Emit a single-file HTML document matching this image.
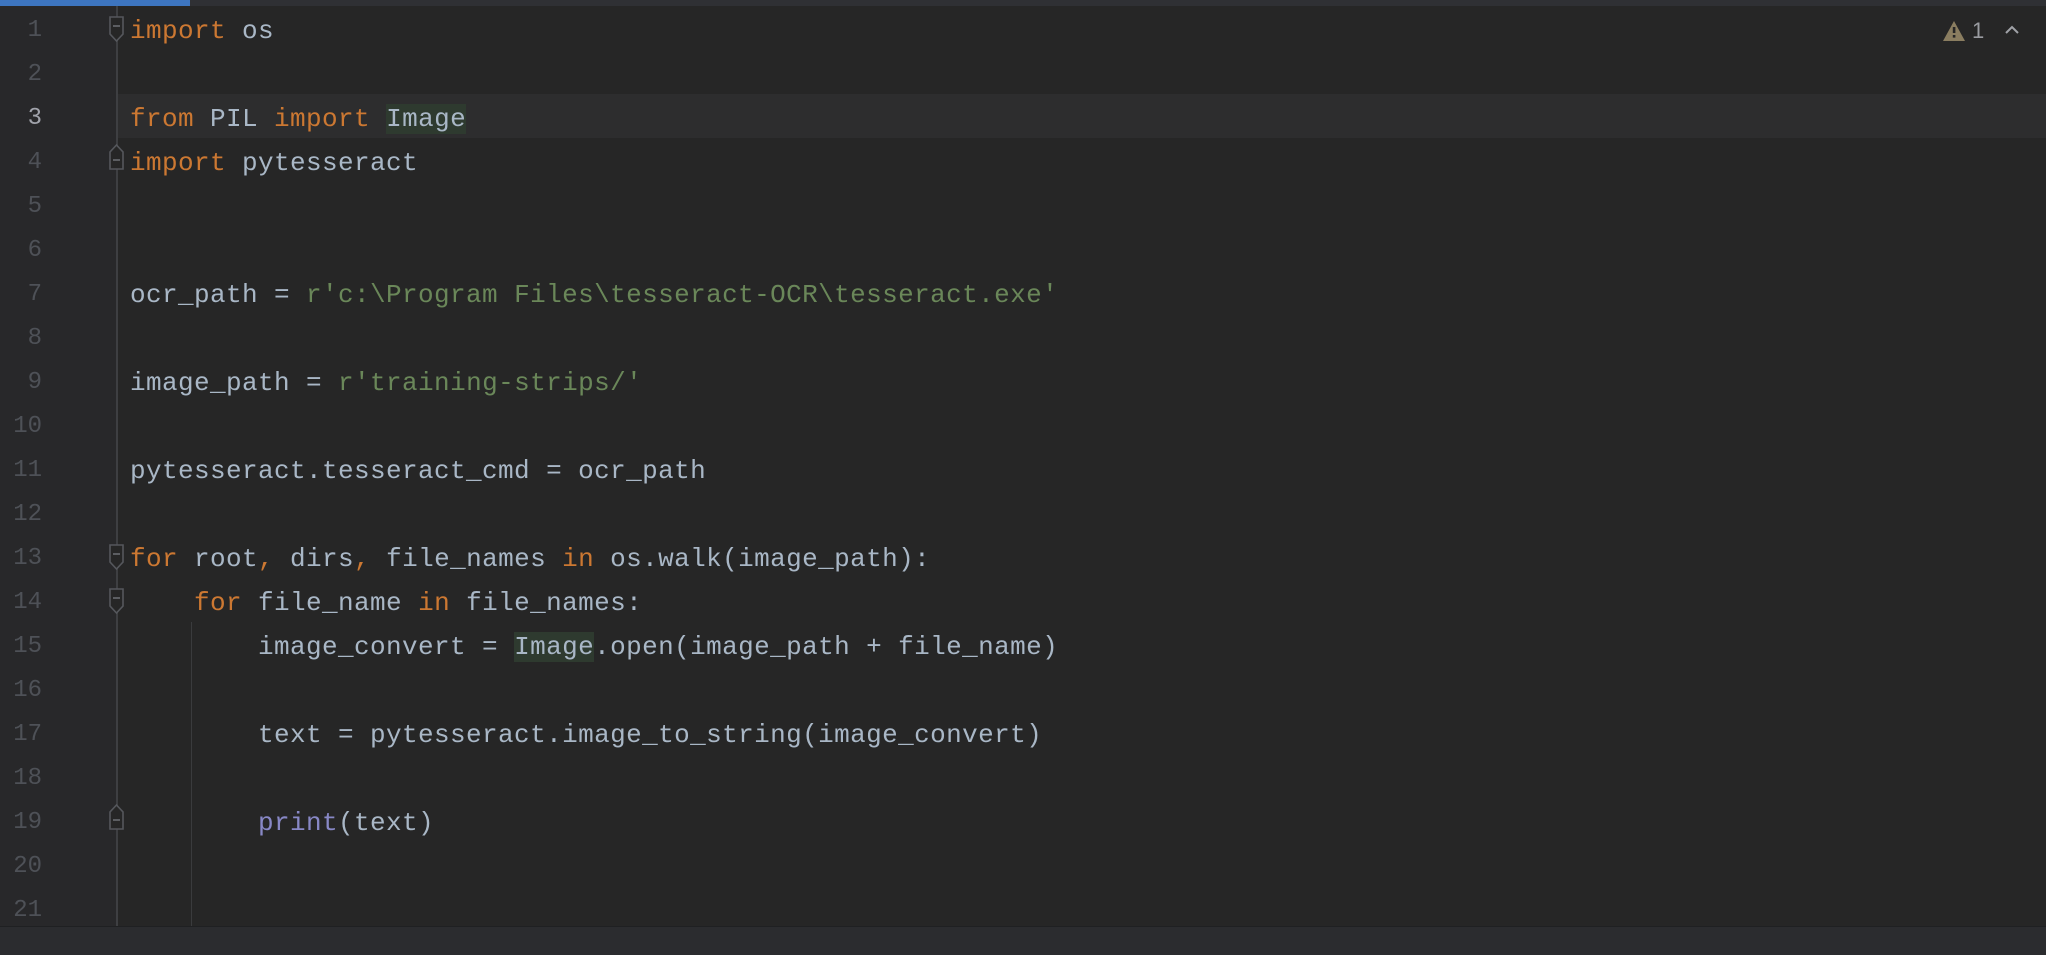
<!DOCTYPE html>
<html><head><meta charset="utf-8"><style>
html,body{margin:0;padding:0;width:2046px;height:954px;overflow:hidden;background:#262626;}
#top{position:absolute;left:0;top:0;width:2046px;height:6px;background:#2f3034;}
#top .b{position:absolute;left:0;top:0;width:190px;height:6px;background:#3d75c0;}
#gutter{position:absolute;left:0;top:6px;width:117px;height:920px;background:#28282a;}
#fold{position:absolute;left:116px;top:6px;width:2px;height:920px;background:#3e3f42;}
#guide{position:absolute;left:191px;top:622px;width:1px;height:304px;background:#3a3b3d;}
#cur{position:absolute;left:117px;top:94px;width:1929px;height:44px;background:#2d2d2e;}
.hl{background:#2e3a2f;}
#bottom{position:absolute;left:0;top:926px;width:2046px;height:28px;background:#2b2c2f;border-top:1px solid #1f2022;}
.ln{position:absolute;left:0;width:42px;text-align:right;font:24px "Liberation Mono",monospace;color:#4e5157;line-height:44px;margin-top:3px;}
.code{position:absolute;left:130px;font:26px "Liberation Mono",monospace;letter-spacing:0.4px;color:#a9b7c6;line-height:44px;white-space:pre;margin-top:3px;}
.k{color:#cc7832}.s{color:#6a8759}.p{color:#8888c6}
svg.f{position:absolute;left:108px;}
</style></head><body>
<div id="top"><div class="b"></div></div>
<div id="gutter"></div>
<div id="cur"></div>
<div id="fold"></div>
<div id="guide"></div>
<div id="bottom"></div>

<div class="ln" style="top:6px">1</div>
<div class="ln" style="top:50px">2</div>
<div class="ln" style="top:94px;color:#a1a3ab">3</div>
<div class="ln" style="top:138px">4</div>
<div class="ln" style="top:182px">5</div>
<div class="ln" style="top:226px">6</div>
<div class="ln" style="top:270px">7</div>
<div class="ln" style="top:314px">8</div>
<div class="ln" style="top:358px">9</div>
<div class="ln" style="top:402px">10</div>
<div class="ln" style="top:446px">11</div>
<div class="ln" style="top:490px">12</div>
<div class="ln" style="top:534px">13</div>
<div class="ln" style="top:578px">14</div>
<div class="ln" style="top:622px">15</div>
<div class="ln" style="top:666px">16</div>
<div class="ln" style="top:710px">17</div>
<div class="ln" style="top:754px">18</div>
<div class="ln" style="top:798px">19</div>
<div class="ln" style="top:842px">20</div>
<div class="ln" style="top:886px">21</div>

<div class="code" style="top:6px"><span class="k">import</span> os</div>
<div class="code" style="top:94px"><span class="k">from</span> PIL <span class="k">import</span> <span class="hl">Image</span></div>
<div class="code" style="top:138px"><span class="k">import</span> pytesseract</div>
<div class="code" style="top:270px">ocr_path = <span class="s">r'c:\Program Files\tesseract-OCR\tesseract.exe'</span></div>
<div class="code" style="top:358px">image_path = <span class="s">r'training-strips/'</span></div>
<div class="code" style="top:446px">pytesseract.tesseract_cmd = ocr_path</div>
<div class="code" style="top:534px"><span class="k">for</span> root<span class="k">,</span> dirs<span class="k">,</span> file_names <span class="k">in</span> os.walk(image_path):</div>
<div class="code" style="top:578px">    <span class="k">for</span> file_name <span class="k">in</span> file_names:</div>
<div class="code" style="top:622px">        image_convert = <span class="hl">Image</span>.open(image_path + file_name)</div>
<div class="code" style="top:710px">        text = pytesseract.image_to_string(image_convert)</div>
<div class="code" style="top:798px">        <span class="p">print</span>(text)</div>

<svg class="f" style="top:16px" width="18" height="28" viewBox="0 0 18 28"><path d="M2 1H15V18L8.5 25L2 18Z" fill="#262626" stroke="#55575c" stroke-width="1.6"/><path d="M5 10H12" stroke="#6a6c71" stroke-width="1.6"/></svg>
<svg class="f" style="top:142px" width="18" height="28" viewBox="0 0 18 28"><path d="M2 27H15V10L8.5 3L2 10Z" fill="#262626" stroke="#55575c" stroke-width="1.6"/><path d="M5 18H12" stroke="#6a6c71" stroke-width="1.6"/></svg>
<svg class="f" style="top:544px" width="18" height="28" viewBox="0 0 18 28"><path d="M2 1H15V18L8.5 25L2 18Z" fill="#262626" stroke="#55575c" stroke-width="1.6"/><path d="M5 10H12" stroke="#6a6c71" stroke-width="1.6"/></svg>
<svg class="f" style="top:588px" width="18" height="28" viewBox="0 0 18 28"><path d="M2 1H15V18L8.5 25L2 18Z" fill="#262626" stroke="#55575c" stroke-width="1.6"/><path d="M5 10H12" stroke="#6a6c71" stroke-width="1.6"/></svg>
<svg class="f" style="top:802px" width="18" height="28" viewBox="0 0 18 28"><path d="M2 27H15V10L8.5 3L2 10Z" fill="#262626" stroke="#55575c" stroke-width="1.6"/><path d="M5 18H12" stroke="#6a6c71" stroke-width="1.6"/></svg>

<svg style="position:absolute;left:1942px;top:20px" width="24" height="22" viewBox="0 0 24 22"><path d="M12 1L23 21H1Z" fill="#8a7d60"/><rect x="10.8" y="7" width="2.6" height="6" fill="#262626"/><rect x="10.8" y="15" width="2.6" height="2.6" fill="#262626"/></svg>
<div style="position:absolute;left:1972px;top:16px;font:22px 'Liberation Sans',sans-serif;color:#9a9ca1;line-height:30px">1</div>
<svg style="position:absolute;left:2004px;top:24px" width="16" height="12" viewBox="0 0 16 12"><path d="M2 9L8 3L14 9" fill="none" stroke="#a0a2a7" stroke-width="2"/></svg>
</body></html>
